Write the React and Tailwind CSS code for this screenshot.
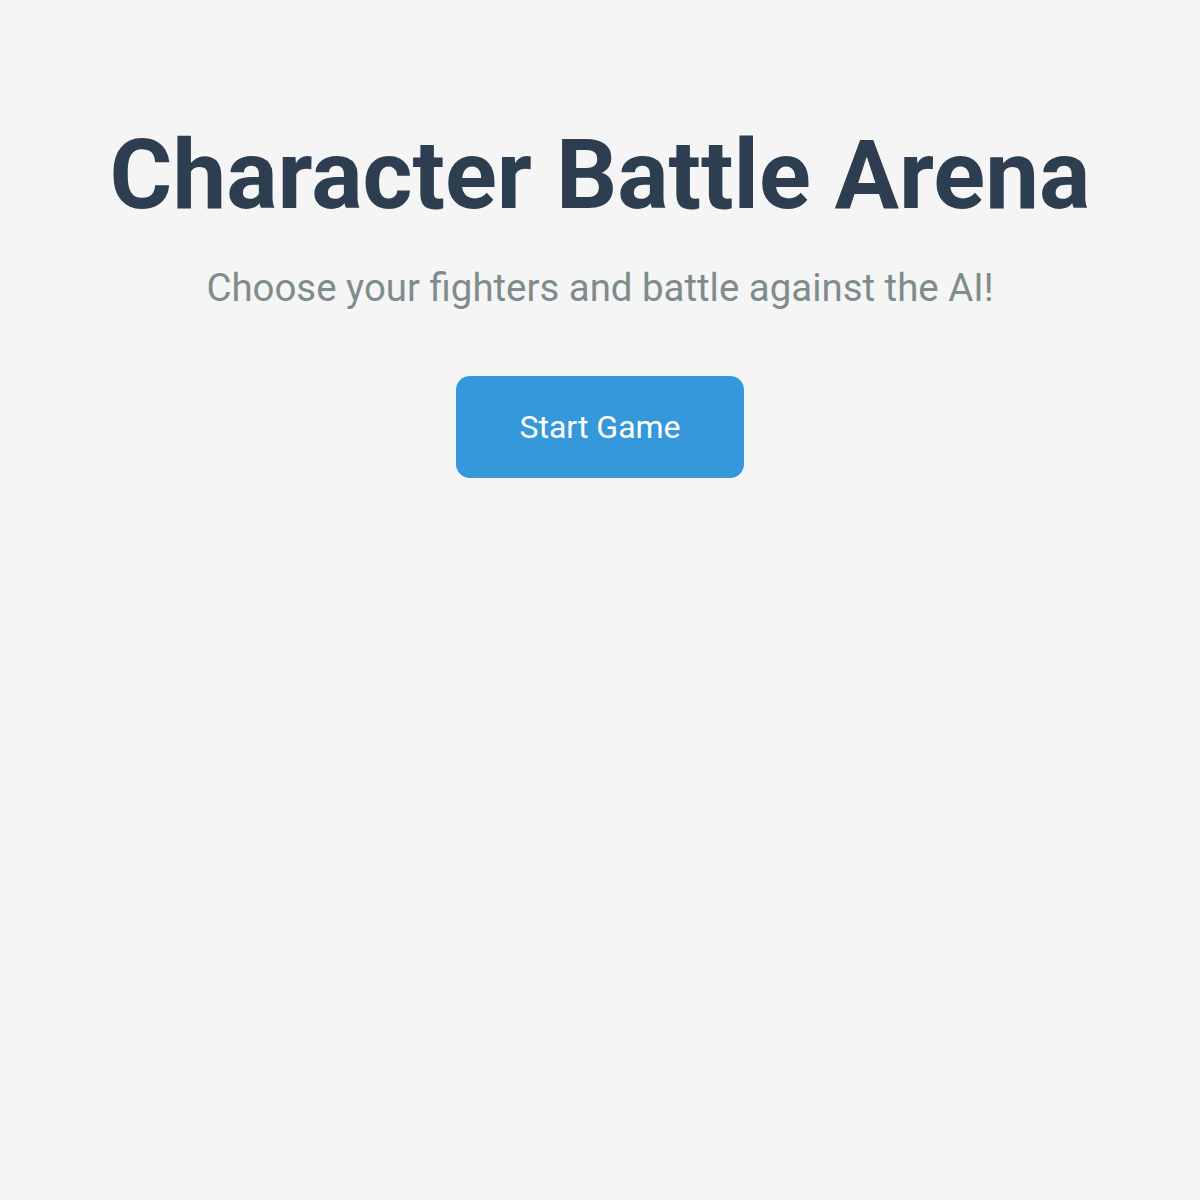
import { useState } from 'react';

function App() {
  const [started, setStarted] = useState(false);

  return (
    <div className="min-h-[1200px] w-full bg-[#f5f5f5] font-['Roboto','Liberation_Sans',sans-serif]">
      <div className="flex flex-col items-center pt-[118px] text-center">
        <h1 className="m-0 text-[96px] leading-[1.2] font-bold text-[#2c3e50]">Character Battle Arena</h1>
        <p className="m-0 mt-[32px] text-[38.4px] leading-[1.2] text-[#7f8c8d]">
          Choose your fighters and battle against the AI!
        </p>
        <button
          className="mt-[65px] flex h-[102px] w-[288px] items-center justify-center rounded-[14px] bg-[#3498db] text-[32px] leading-[1.2] text-white cursor-pointer"
          onClick={() => setStarted(true)}
        >
          Start Game
        </button>
      </div>
    </div>
  );
}

export default App;
